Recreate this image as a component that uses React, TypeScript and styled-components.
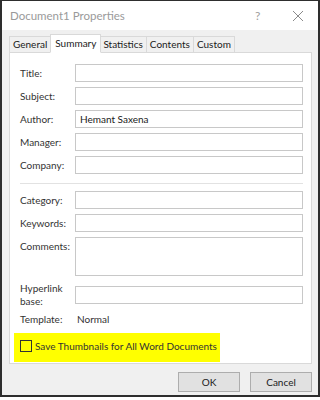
import styled, { createGlobalStyle } from "styled-components";

const GlobalStyle = createGlobalStyle`
  html, body {
    margin: 0;
    padding: 0;
    background: #ffffff;
  }
  * {
    box-sizing: border-box;
  }
`;

const labels = ["Title:", "Subject:", "Author:", "Manager:", "Company:"];
const labels2 = ["Category:", "Keywords:"];
const tabs = ["General", "Summary", "Statistics", "Contents", "Custom"];

function App() {
  return (
    <Page>
      <GlobalStyle />
      <Frame>
        <TitleBar>
          <Title>Document1 Properties</Title>
          <Help>?</Help>
          <Close>
            <svg width="12" height="12" viewBox="0 0 12 12">
              <path d="M1 1 L11 11 M11 1 L1 11" stroke="#8a8a8a" strokeWidth="1" fill="none" />
            </svg>
          </Close>
        </TitleBar>
        <Body>
          <TabRow>
            {tabs.map((t) => (
              <Tab key={t} $active={t === "Summary"}>
                {t}
              </Tab>
            ))}
          </TabRow>
          <Panel>
            {labels.map((l) => (
              <Row key={l}>
                <Label>{l}</Label>
                <Field>{l === "Author:" ? "Hemant Saxena" : ""}</Field>
              </Row>
            ))}
            <Separator />
            {labels2.map((l) => (
              <Row key={l}>
                <Label>{l}</Label>
                <Field />
              </Row>
            ))}
            <Row>
              <Label>Comments:</Label>
              <Field $tall />
            </Row>
            <LinkRow>
              <Label $flat>
                Hyperlink
                <br />
                base:
              </Label>
              <Field />
            </LinkRow>
            <TemplateRow>
              <Label $flat>Template:</Label>
              <Value>Normal</Value>
            </TemplateRow>
            <Highlight>
              <CheckBox />
              <span>Save Thumbnails for All Word Documents</span>
            </Highlight>
          </Panel>
          <Footer>
            <Button>OK</Button>
            <Button>Cancel</Button>
          </Footer>
        </Body>
      </Frame>
    </Page>
  );
}

const Page = styled.div`
  width: 320px;
  height: 400px;
  background: #ffffff;
  font-family: Lato, "Liberation Sans", sans-serif;
`;

const Frame = styled.div`
  width: 320px;
  height: 397px;
  border: 2px solid #2e2e2e;
  border-top-width: 1px;
  display: flex;
  flex-direction: column;
`;

const TitleBar = styled.div`
  height: 29px;
  background: #ffffff;
  display: flex;
  align-items: center;
  padding: 0 0 0 8px;
`;

const Title = styled.div`
  flex: 1;
  font-size: 11.5px;
  color: #9a9a9a;
`;

const Help = styled.div`
  width: 12px;
  font-size: 12px;
  color: #a0a0a0;
  margin-right: 25px;
`;

const Close = styled.div`
  width: 12px;
  height: 12px;
  display: flex;
  margin-right: 14px;
`;

const Body = styled.div`
  flex: 1;
  background: #f0f0f0;
  padding: 4px 6px 0 7px;
  display: flex;
  flex-direction: column;
`;

const TabRow = styled.div`
  display: flex;
  align-items: flex-end;
  height: 19px;
  position: relative;
  z-index: 1;
  margin-bottom: -1px;
`;

const Tab = styled.div<{ $active?: boolean }>`
  height: ${(p) => (p.$active ? "19px" : "17px")};
  padding: ${(p) => (p.$active ? "1px 4px 0" : "0 3px")};
  margin: ${(p) => (p.$active ? "0 -1px" : "0")};
  background: ${(p) => (p.$active ? "#ffffff" : "#f0f0f0")};
  border: 1px solid #d9d9d9;
  border-bottom: ${(p) => (p.$active ? "1px solid #ffffff" : "1px solid #d9d9d9")};
  margin-left: -1px;
  font-size: 10px;
  line-height: 15px;
  color: #1a1a1a;
  position: relative;
  z-index: ${(p) => (p.$active ? 2 : 1)};
  &:first-child {
    margin-left: 0;
  }
`;

const Panel = styled.div`
  width: 303px;
  height: 312px;
  background: #ffffff;
  border: 1px solid #d9d9d9;
  padding: 11px 8px 0 10px;
  display: flex;
  flex-direction: column;
`;

const Row = styled.div`
  display: flex;
  align-items: flex-start;
  margin-bottom: 5px;
`;

const LinkRow = styled(Row)`
  align-items: center;
  margin-top: 1px;
  margin-bottom: 2px;
`;

const Label = styled.div<{ $flat?: boolean }>`
  width: 55px;
  flex-shrink: 0;
  font-size: 10px;
  line-height: 13px;
  color: #333333;
  padding-top: ${(p) => (p.$flat ? "0" : "3px")};
`;

const Field = styled.div<{ $tall?: boolean }>`
  flex: 1;
  height: ${(p) => (p.$tall ? "39px" : "18px")};
  border: 1px solid #c8c8c8;
  font-size: 10px;
  line-height: 16px;
  padding: 0 4px;
  color: #1a1a1a;
`;

const Separator = styled.div`
  height: 1px;
  background: #e2e2e2;
  margin: 4px 0 7px 0;
`;

const TemplateRow = styled.div`
  display: flex;
  align-items: center;
  height: 18px;
`;

const Value = styled.div`
  font-size: 10px;
  color: #333333;
  padding-left: 2px;
`;

const Highlight = styled.div`
  margin: 5px 0 0 -6px;
  width: 206px;
  height: 29px;
  background: #ffff00;
  display: flex;
  align-items: center;
  padding: 0 0 4px 6px;
  gap: 3px;
  font-size: 10px;
  color: #333333;
  white-space: nowrap;
`;

const CheckBox = styled.div`
  width: 12px;
  height: 12px;
  border: 1px solid #333333;
  background: transparent;
`;

const Footer = styled.div`
  display: flex;
  justify-content: flex-end;
  gap: 10px;
  padding-top: 8px;
`;

const Button = styled.div`
  width: 62px;
  height: 20px;
  background: #e1e1e1;
  border: 1px solid #adadad;
  font-size: 10px;
  color: #1a1a1a;
  display: flex;
  align-items: center;
  justify-content: center;
`;

export default App;
